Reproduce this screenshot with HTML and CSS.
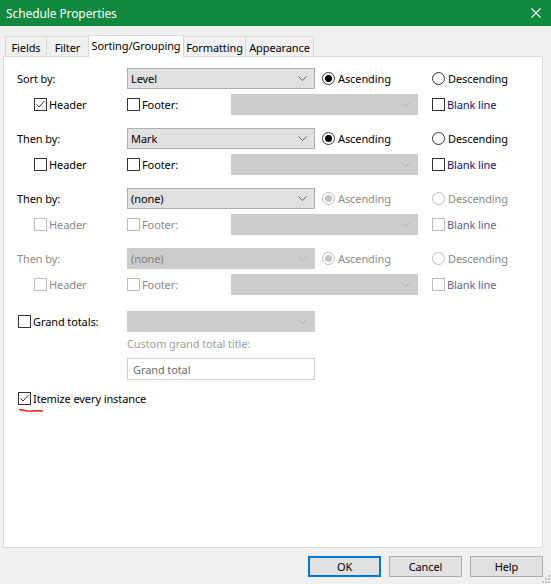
FILE: index.html
```html
<!DOCTYPE html>
<html>
<head>
<meta charset="utf-8">
<link rel="stylesheet" href="styles.css">
</head>
<body>
<div class="window">
  <div class="titlebar">
    <span class="title">Schedule Properties</span>
    <svg class="close" width="10" height="10" viewBox="0 0 10 10"><path d="M0.5 0.5 L9.5 9.5 M9.5 0.5 L0.5 9.5" stroke="#fff" stroke-width="1.1" fill="none"/></svg>
  </div>

  <div class="tabs">
    <div class="tab t-fields">Fields</div>
    <div class="tab t-filter">Filter</div>
    <div class="tab t-sort active">Sorting/Grouping</div>
    <div class="tab t-format">Formatting</div>
    <div class="tab t-appear">Appearance</div>
  </div>

  <div class="panel">
    <!-- group 1 -->
    <div class="group">
      <div class="row">
        <div class="label">Sort by:</div>
        <div class="select"><span>Level</span><svg class="chev" width="9" height="5" viewBox="0 0 9 5"><path d="M0.5 0.5 L4.5 4.5 L8.5 0.5" fill="none" stroke="#606060"/></svg></div>
        <div class="opt asc"><span class="radio on"></span>Ascending</div>
        <div class="opt"><span class="radio"></span>Descending</div>
      </div>
      <div class="row">
        <div class="hdr"><span class="cb checked"><svg width="11" height="11" viewBox="0 0 11 11"><path d="M1.5 5.5 L4 8 L9.5 2" fill="none" stroke="#333" stroke-width="1"/></svg></span>Header</div>
        <div class="ftr"><span class="cb"></span>Footer:</div>
        <div class="select wide off"><span></span><svg class="chev" width="9" height="5" viewBox="0 0 9 5"><path d="M0.5 0.5 L4.5 4.5 L8.5 0.5" fill="none" stroke="#b0b0b0"/></svg></div>
        <div class="blank"><span class="cb"></span>Blank line</div>
      </div>
    </div>

    <!-- group 2 -->
    <div class="group">
      <div class="row">
        <div class="label">Then by:</div>
        <div class="select"><span>Mark</span><svg class="chev" width="9" height="5" viewBox="0 0 9 5"><path d="M0.5 0.5 L4.5 4.5 L8.5 0.5" fill="none" stroke="#606060"/></svg></div>
        <div class="opt asc"><span class="radio on"></span>Ascending</div>
        <div class="opt"><span class="radio"></span>Descending</div>
      </div>
      <div class="row">
        <div class="hdr"><span class="cb"></span>Header</div>
        <div class="ftr"><span class="cb"></span>Footer:</div>
        <div class="select wide off"><span></span><svg class="chev" width="9" height="5" viewBox="0 0 9 5"><path d="M0.5 0.5 L4.5 4.5 L8.5 0.5" fill="none" stroke="#b0b0b0"/></svg></div>
        <div class="blank"><span class="cb"></span>Blank line</div>
      </div>
    </div>

    <!-- group 3 -->
    <div class="group">
      <div class="row">
        <div class="label">Then by:</div>
        <div class="select"><span>(none)</span><svg class="chev" width="9" height="5" viewBox="0 0 9 5"><path d="M0.5 0.5 L4.5 4.5 L8.5 0.5" fill="none" stroke="#606060"/></svg></div>
        <div class="opt asc dis"><span class="radio on"></span>Ascending</div>
        <div class="opt dis"><span class="radio"></span>Descending</div>
      </div>
      <div class="row dis">
        <div class="hdr"><span class="cb"></span>Header</div>
        <div class="ftr"><span class="cb"></span>Footer:</div>
        <div class="select wide off"><span></span><svg class="chev" width="9" height="5" viewBox="0 0 9 5"><path d="M0.5 0.5 L4.5 4.5 L8.5 0.5" fill="none" stroke="#b0b0b0"/></svg></div>
        <div class="blank"><span class="cb"></span>Blank line</div>
      </div>
    </div>

    <!-- group 4 -->
    <div class="group">
      <div class="row">
        <div class="label dis">Then by:</div>
        <div class="select off"><span>(none)</span><svg class="chev" width="9" height="5" viewBox="0 0 9 5"><path d="M0.5 0.5 L4.5 4.5 L8.5 0.5" fill="none" stroke="#b0b0b0"/></svg></div>
        <div class="opt asc dis"><span class="radio on"></span>Ascending</div>
        <div class="opt dis"><span class="radio"></span>Descending</div>
      </div>
      <div class="row dis">
        <div class="hdr"><span class="cb"></span>Header</div>
        <div class="ftr"><span class="cb"></span>Footer:</div>
        <div class="select wide off"><span></span><svg class="chev" width="9" height="5" viewBox="0 0 9 5"><path d="M0.5 0.5 L4.5 4.5 L8.5 0.5" fill="none" stroke="#b0b0b0"/></svg></div>
        <div class="blank"><span class="cb"></span>Blank line</div>
      </div>
    </div>

    <div class="row grand">
      <div class="label gl"><span class="cb"></span>Grand totals:</div>
      <div class="select off"><span></span><svg class="chev" width="9" height="5" viewBox="0 0 9 5"><path d="M0.5 0.5 L4.5 4.5 L8.5 0.5" fill="none" stroke="#b0b0b0"/></svg></div>
    </div>
    <div class="custom-label">Custom grand total title:</div>
    <div class="custom-input">Grand total</div>

    <div class="itemize"><span class="cb checked"><svg width="11" height="11" viewBox="0 0 11 11"><path d="M1.5 5.5 L4 8 L9.5 2" fill="none" stroke="#333" stroke-width="1"/></svg></span>Itemize every instance</div>
    <svg class="squiggle" width="24" height="5" viewBox="0 0 24 5"><path d="M0.5 1.5 C5 2.5 9 3.5 13 3 C17 2.6 20 2.6 23.5 3" fill="none" stroke="#e01818" stroke-width="1.4" stroke-linecap="round"/></svg>
  </div>

  <div class="buttons">
    <div class="btn default">OK</div>
    <div class="btn">Cancel</div>
    <div class="btn">Help</div>
  </div>

  <svg class="grip" width="8" height="8" viewBox="0 0 8 8">
    <rect x="6" y="0" width="2" height="2" fill="#c4c4c4"/>
    <rect x="3" y="3" width="2" height="2" fill="#c4c4c4"/>
    <rect x="6" y="3" width="2" height="2" fill="#c4c4c4"/>
    <rect x="0" y="6" width="2" height="2" fill="#c4c4c4"/>
    <rect x="3" y="6" width="2" height="2" fill="#c4c4c4"/>
    <rect x="6" y="6" width="2" height="2" fill="#c4c4c4"/>
  </svg>
</div>
</body>
</html>
```

FILE: styles.css
```css
html, body {
  margin: 0;
  padding: 0;
}
body {
  width: 551px;
  height: 584px;
  overflow: hidden;
  background: #f0f0f0;
  font-family: "Noto Sans", "DejaVu Sans", sans-serif;
  font-size: 11px;
  letter-spacing: -0.1px;
  color: #000;
}
.window {
  position: relative;
  width: 551px;
  height: 584px;
}
.titlebar {
  height: 26px;
  background: #10893e;
  color: #fff;
  display: flex;
  align-items: center;
  justify-content: space-between;
  padding: 0 10px 0 6px;
  font-size: 12px;
}
.close {
  display: block;
}
.tabs {
  display: flex;
  align-items: flex-end;
  margin: 9px 0 0 5px;
  height: 21px;
  position: relative;
  z-index: 2;
}
.tab {
  box-sizing: border-box;
  height: 20px;
  border: 1px solid #d9d9d9;
  border-bottom: none;
  border-right: none;
  background: #f0f0f0;
  display: flex;
  align-items: center;
  justify-content: center;
  padding-top: 1px;
}
.t-fields { width: 41px; }
.t-filter { width: 42px; }
.t-sort { width: 96px; }
.t-format { width: 61px; }
.t-appear { width: 69px; border-right: 1px solid #d9d9d9; }
.tab.active {
  height: 22px;
  background: #fff;
  border-right: 1px solid #d9d9d9;
  margin-bottom: -1px;
  padding-top: 0;
  padding-bottom: 3px;
}
.tab.active + .tab { border-left: none; }
.panel {
  box-sizing: border-box;
  margin-left: 3px;
  width: 540px;
  height: 492px;
  background: #fff;
  border: 1px solid #d9d9d9;
  padding: 11px 0 0 13px;
}
.group {
  display: flex;
  flex-direction: column;
  gap: 5px;
  margin-bottom: 13px;
}
.row {
  display: flex;
  align-items: center;
  height: 21px;
}
.label {
  width: 110px;
  flex: none;
}
.select {
  box-sizing: border-box;
  width: 188px;
  height: 21px;
  flex: none;
  background: #e1e1e1;
  border: 1px solid #adadad;
  display: flex;
  align-items: center;
  justify-content: space-between;
  padding: 0 7px 0 3px;
  margin-right: 7px;
}
.select.off {
  background: #cccccc;
  border-color: #cccccc;
  color: #838383;
}
.select.wide {
  width: 187px;
  margin-right: 14px;
}
.chev { display: block; }
.opt {
  width: 110px;
  display: flex;
  align-items: center;
  flex: none;
}
.radio {
  box-sizing: border-box;
  width: 13px;
  height: 13px;
  border: 1px solid #333;
  border-radius: 50%;
  margin-right: 3px;
  display: flex;
  align-items: center;
  justify-content: center;
  background: #fff;
}
.radio.on::after {
  content: "";
  width: 7px;
  height: 7px;
  border-radius: 50%;
  background: #000;
}
.hdr {
  box-sizing: border-box;
  width: 110px;
  padding-left: 17px;
  display: flex;
  align-items: center;
  flex: none;
}
.ftr {
  width: 104px;
  display: flex;
  align-items: center;
  flex: none;
}
.blank {
  display: flex;
  align-items: center;
  color: #12126e;
}
.cb {
  box-sizing: border-box;
  width: 13px;
  height: 13px;
  border: 1px solid #333;
  background: #fff;
  margin-right: 2px;
  flex: none;
  display: flex;
  align-items: center;
  justify-content: center;
}
.cb svg { display: block; }
.dis, .dis .opt, .opt.dis {
  color: #8a8a8a;
}
.dis .cb, .dis .radio, .opt.dis .radio {
  border-color: #bcbcbc;
}
.opt.dis .radio.on::after {
  background: #c4c4c4;
}
.dis .blank {
  color: #63638f;
}
.grand {
  margin-top: 16px;
}
.gl {
  display: flex;
  align-items: center;
  padding-left: 1px;
  box-sizing: border-box;
}
.custom-label {
  margin: 4px 0 0 110px;
  height: 16px;
  line-height: 16px;
  color: #a0a0a0;
}
.custom-input {
  box-sizing: border-box;
  margin: 6px 0 0 110px;
  width: 188px;
  height: 22px;
  border: 1px solid #cfcfcf;
  color: #6d6d6d;
  padding-left: 5px;
  display: flex;
  align-items: center;
}
.itemize {
  display: flex;
  align-items: center;
  margin: 12px 0 0 1px;
  height: 13px;
}
.squiggle {
  display: block;
  margin: 3px 0 0 2px;
}
.buttons {
  display: flex;
  justify-content: flex-end;
  gap: 8px;
  margin-top: 8px;
  padding-right: 8px;
}
.btn {
  box-sizing: border-box;
  width: 73px;
  height: 21px;
  background: #e1e1e1;
  border: 1px solid #adadad;
  display: flex;
  align-items: center;
  justify-content: center;
}
.btn.default {
  border: 2px solid #0078d7;
}
.grip {
  position: absolute;
  right: 1px;
  bottom: 1px;
}
```
